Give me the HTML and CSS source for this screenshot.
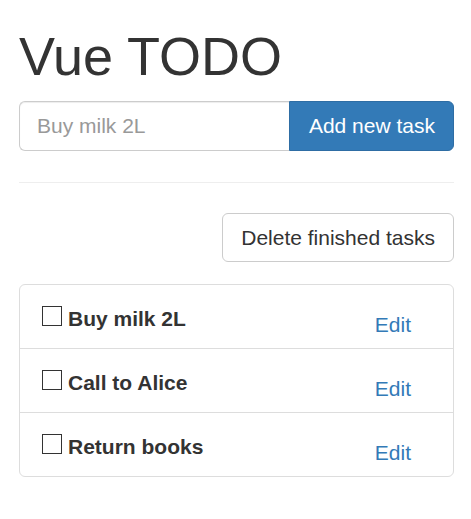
FILE: index.html
```html
<!DOCTYPE html>
<html lang="en">
<head>
<meta charset="utf-8">
<title>Vue TODO</title>
<link rel="stylesheet" href="styles.css">
</head>
<body>
<div class="container">
  <h1 class="title">Vue TODO</h1>
  <div class="input-group">
    <input class="task-input" type="text" placeholder="Buy milk 2L">
    <button class="btn btn-primary">Add new task</button>
  </div>
  <hr class="divider">
  <div class="actions">
    <button class="btn btn-default">Delete finished tasks</button>
  </div>
  <ul class="list-group">
    <li class="list-item">
      <label class="task-label"><input type="checkbox" class="task-check"><span class="task-text">Buy milk 2L</span></label>
      <a class="edit-link" href="#">Edit</a>
    </li>
    <li class="list-item">
      <label class="task-label"><input type="checkbox" class="task-check"><span class="task-text">Call to Alice</span></label>
      <a class="edit-link" href="#">Edit</a>
    </li>
    <li class="list-item">
      <label class="task-label"><input type="checkbox" class="task-check"><span class="task-text">Return books</span></label>
      <a class="edit-link" href="#">Edit</a>
    </li>
  </ul>
</div>
</body>
</html>
```

FILE: styles.css
```css
* { box-sizing: border-box; }
html, body { margin: 0; padding: 0; background: #fff; }
body {
  font-family: "Liberation Sans", Arial, sans-serif;
  color: #333;
  font-size: 21px;
}
.container {
  padding: 0 17px 0 19px;
}
.title {
  margin: 26px 0 15px;
  font-size: 54px;
  line-height: 60px;
  font-weight: 400;
  color: #333;
}
.input-group {
  display: flex;
  height: 50px;
}
.task-input {
  flex: 1;
  min-width: 0;
  height: 50px;
  border: 1px solid #ccc;
  border-right: 0;
  border-radius: 6px 0 0 6px;
  padding: 0 17px;
  font-family: inherit;
  font-size: 21px;
  color: #555;
  outline: none;
  box-shadow: inset 0 1px 1px rgba(0,0,0,.075);
}
.task-input::placeholder { color: #999; }
.btn {
  font-family: inherit;
  font-size: 21px;
  border: 1px solid transparent;
  border-radius: 6px;
  cursor: pointer;
  line-height: 1.2;
  white-space: nowrap;
}
.btn-primary {
  flex: none;
  height: 50px;
  padding: 0 18px 0 19px;
  background: #337ab7;
  border-color: #2e6da4;
  color: #fff;
  border-radius: 0 6px 6px 0;
}
.divider {
  margin: 31px 0 30px;
  border: 0;
  border-top: 1px solid #eee;
}
.actions {
  display: flex;
  justify-content: flex-end;
}
.btn-default {
  height: 49px;
  padding: 0 18px;
  background: #fff;
  border-color: #ccc;
  color: #333;
}
.list-group {
  list-style: none;
  margin: 22px 0 0;
  padding: 0;
  border: 1px solid #ddd;
  border-radius: 6px;
}
.list-item {
  display: flex;
  align-items: flex-start;
  justify-content: space-between;
  height: 64px;
  padding: 21px 42px 0 22px;
  border-bottom: 1px solid #ddd;
}
.list-item:last-child {
  border-bottom: 0;
  height: 63px;
}
.task-label {
  display: flex;
  align-items: flex-start;
  font-weight: 700;
  line-height: 24px;
}
.task-text {
  margin-top: 1px;
}
.task-check {
  appearance: none;
  -webkit-appearance: none;
  width: 20px;
  height: 20px;
  margin: 0 6px 0 0;
  border: 1.5px solid #333;
  background: #fff;
}
.edit-link {
  margin-top: 7px;
  color: #337ab7;
  text-decoration: none;
  line-height: 24px;
}
```
